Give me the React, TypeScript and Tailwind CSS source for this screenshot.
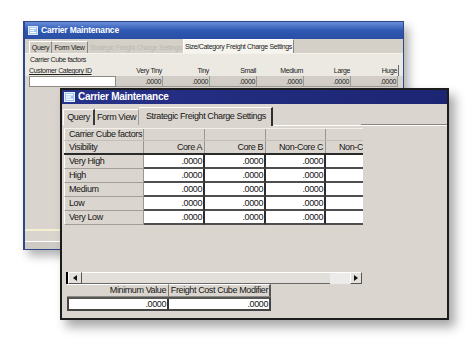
import React from "react";

const rows = ["Very High", "High", "Medium", "Low", "Very Low"];
const backCols = ["Very Tiny", "Tiny", "Small", "Medium", "Large", "Huge"];
const frontCols = [
  { label: "Core A", w: "w-[61px]" },
  { label: "Core B", w: "w-[61px]" },
  { label: "Non-Core C", w: "w-[60px]" },
  { label: "Non-Core D", w: "w-[60px]" },
];

function AppIcon({ size = 11 }: { size?: number }) {
  return (
    <svg width={size} height={size - 1} viewBox="0 0 11 10" className="shrink-0">
      <rect x="0.5" y="0.5" width="10" height="9" fill="#9cc4ee" stroke="#e8f2ff" />
      <rect x="2" y="2" width="7" height="1.4" fill="#ffffff" />
      <rect x="2" y="4.3" width="5" height="1.4" fill="#ffffff" />
      <rect x="2" y="6.6" width="7" height="1.4" fill="#ffffff" />
    </svg>
  );
}

function BackWindow() {
  return (
    <div className="absolute left-[23px] top-[21px] w-[381px] h-[229px] flex flex-col border border-[#30478a] border-l-2 bg-[#d9d5ce] shadow-[5px_6px_9px_rgba(0,0,0,0.3)] text-[7px] tracking-[-0.35px] leading-none whitespace-nowrap text-[#222]">
      <div className="h-[17px] shrink-0 flex items-center gap-[3px] pl-[3px] bg-gradient-to-b from-[#6a8fd8] via-[#2f58b2] to-[#2a4ea4]">
        <AppIcon size={10} />
        <span className="text-[8.5px] font-bold tracking-[-0.2px] text-white">Carrier Maintenance</span>
      </div>
      <div className="h-[15px] shrink-0 flex items-end pl-[4px] bg-[#d4d0c8] border-b border-[#f4f2ec]">
        <div className="w-[23px] h-[12px] flex items-center justify-center border-t border-l border-white border-r border-r-[#8a867e]">Query</div>
        <div className="w-[36px] h-[12px] flex items-center justify-center border-t border-white border-r border-r-[#8a867e]">Form View</div>
        <div className="w-[95px] h-[12px] flex items-center justify-center text-[#bcb8b0]">Strategic Freight Charge Settings</div>
        <div className="w-[111px] h-[14px] flex items-center justify-center bg-[#f5f4ef] border-t border-l border-white border-r border-r-[#8a867e]">
          Size/Category Freight Charge Settings
        </div>
      </div>
      <div className="bg-[#ece9e2] shrink-0">
        <div className="h-[11px] flex items-center pl-[5px]">Carrier Cube factors</div>
        <div className="h-[11px] flex items-center">
          <div className="w-[87px] ml-[4px] underline">Customer Category ID</div>
          {backCols.map((c) => (
            <div key={c} className="w-[47px] text-right pr-[1px]">
              {c}
            </div>
          ))}
          <div className="w-px h-full bg-[#6e6a64]" />
        </div>
      </div>
      <div className="h-[11px] shrink-0 flex">
        <div className="w-[87px] ml-[4px] bg-white border border-[#8d8a84]" />
        {backCols.map((c) => (
          <div key={c} className="w-[47px] h-full flex items-center justify-end pr-[1px] bg-[#d2cec7] border-r border-b border-[#9d9993]">
            .0000
          </div>
        ))}
      </div>
      <div className="flex-1" />
      <div className="h-[2px] bg-[#f3efcf]" />
      <div className="h-[10px]" />
      <div className="h-px bg-white" />
      <div className="h-[7px] bg-[#cfcbc4]" />
    </div>
  );
}

function FrontWindow() {
  return (
    <div className="absolute left-[60px] top-[88px] w-[389px] h-[232px] flex flex-col border-2 border-[#1c1c1c] bg-[#dbd5cf] shadow-[6px_7px_10px_rgba(0,0,0,0.35)] text-[9px] tracking-[-0.4px] leading-none whitespace-nowrap text-[#151515]">
      <div className="h-[14px] shrink-0 flex items-center gap-[3px] pl-[2px] bg-gradient-to-r from-[#27328a] to-[#1c2572]">
        <AppIcon />
        <span className="text-[10px] font-bold tracking-[-0.3px] text-white">Carrier Maintenance</span>
      </div>

      <div className="h-[22px] shrink-0 flex items-end pl-[1px]">
        <div className="w-[32px] h-[16px] mb-[1px] flex items-center justify-center border-t border-l border-white border-r-2 border-r-[#3a3a3a]">
          Query
        </div>
        <div className="w-[44px] h-[16px] mb-[1px] flex items-center justify-center border-t border-white border-r border-r-[#a09b95]">
          Form View
        </div>
        <div className="w-[134px] h-[19px] flex items-center pl-[7px] pb-[2px] border-t border-white border-r-2 border-r-[#2e2e2e]">
          Strategic Freight Charge Settings
        </div>
        <div className="flex-1 flex flex-col">
          <div className="h-px ml-[88px] bg-[#8a8580]" />
          <div className="h-px bg-white" />
        </div>
      </div>

      <div className="mt-[2px] ml-[2px] w-[299px] shrink-0 overflow-hidden">
        <div className="h-[12px] flex border-t border-[#f3f0ec]">
          <div className="w-[80px] shrink-0 h-full flex items-center pl-[4px] border-l border-white border-r border-r-[#9b968f]">
            Carrier Cube factors
          </div>
          {frontCols.map((c) => (
            <div key={c.label} className={`${c.w} shrink-0 h-full border-r border-[#9b968f]`} />
          ))}
        </div>
        <div className="h-[13px] flex border-t border-[#c4beb8]">
          <div className="w-[80px] shrink-0 h-full flex items-center pl-[4px] border-l border-white border-r border-r-[#9b968f]">
            Visibility
          </div>
          {frontCols.map((c) => (
            <div key={c.label} className={`${c.w} shrink-0 h-full flex items-center justify-end pr-[2px] border-r border-[#9b968f]`}>
              {c.label}
            </div>
          ))}
        </div>
        <div className="h-[2px] bg-[#2a2a2a]" />
        {rows.map((r) => (
          <div key={r} className="h-[14px] flex">
            <div className="w-[80px] shrink-0 h-full flex items-center pl-[4px] border-l border-white border-b border-b-[#a29d97] border-r border-r-[#9b968f]">
              {r}
            </div>
            {frontCols.map((c) => (
              <div key={c.label} className={`${c.w} shrink-0 h-full flex items-center justify-end pr-[1px] bg-white border-b-2 border-b-[#4e4e4e] border-r-2 border-r-[#2c2c2c]`}>
                {c.label === "Non-Core D" ? "" : ".0000"}
              </div>
            ))}
          </div>
        ))}
      </div>

      <div className="mt-[47px] ml-[4px] w-[296px] h-[12px] shrink-0 flex">
        <div className="w-[2px] bg-black" />
        <div className="w-[14px] flex items-center justify-center bg-[#e4e0dc] border-t border-l border-white border-r border-b border-r-[#555] border-b-[#555]">
          <svg width="4" height="6" viewBox="0 0 4 6"><path d="M4 0 L0 3 L4 6 Z" fill="#111" /></svg>
        </div>
        <div className="flex-1 bg-[#e2ded9] border-t border-white border-b border-b-[#6a6a6a]" />
        <div className="w-[20px] bg-[#ecebe9] border-t border-white" />
        <div className="w-[12px] flex items-center justify-center bg-[#e4e0dc] border-t border-l border-white border-r border-b border-r-[#555] border-b-[#555]">
          <svg width="4" height="6" viewBox="0 0 4 6"><path d="M0 0 L4 3 L0 6 Z" fill="#111" /></svg>
        </div>
      </div>

      <div className="ml-[5px] shrink-0">
        <div className="h-[13px] flex">
          <div className="w-[102px] h-full flex items-center justify-end pr-[2px] border-t border-white border-r border-r-[#7d7872] border-b border-b-[#8f8a84]">
            Minimum Value
          </div>
          <div className="w-[102px] h-full flex items-center justify-end pr-[1px] border-t border-white border-r-2 border-r-[#555] border-b border-b-[#8f8a84]">
            Freight Cost Cube Modifier
          </div>
        </div>
        <div className="h-[14px] flex w-[204px] border-2 border-[#444] border-t-[#555]">
          <div className="w-[100px] h-full flex items-center justify-end pr-[1px] bg-white border-r-2 border-[#333]">
            .0000
          </div>
          <div className="flex-1 h-full flex items-center justify-end pr-[1px] bg-white">.0000</div>
        </div>
      </div>
    </div>
  );
}

export default function App() {
  return (
    <div className="relative w-[474px] h-[345px] overflow-hidden bg-white font-['Liberation_Sans',Arial,sans-serif]">
      <BackWindow />
      <FrontWindow />
    </div>
  );
}
